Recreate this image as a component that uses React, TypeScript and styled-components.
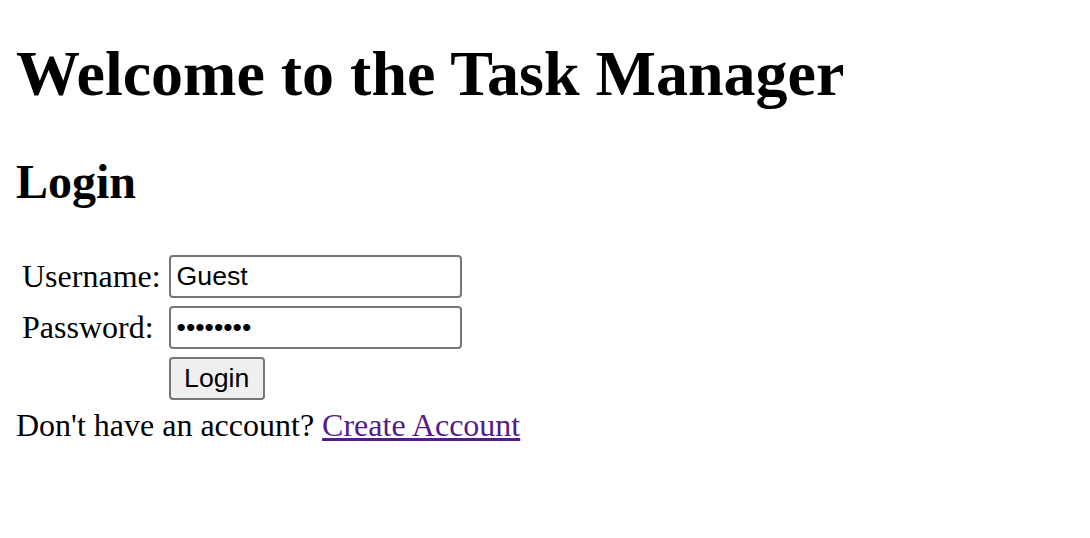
import {FC} from "react";
import styled, {createGlobalStyle} from "styled-components";

const GlobalStyle = createGlobalStyle`
  html, body {
    margin: 0;
    padding: 0;
    background: #fff;
  }

  body {
    margin: 16px;
    font-family: "Liberation Serif", "Times New Roman", serif;
    font-size: 32px;
    color: #000;
  }
`;

const Page = styled.div`
  display: block;
`;

const Title = styled.h1`
  font-size: 64px;
  font-weight: bold;
  margin: 21.44px 0 42.88px;
`;

const SubTitle = styled.h2`
  font-size: 48px;
  font-weight: bold;
  margin: 39.84px 0;
`;

const FormTable = styled.table`
  border-spacing: 4px;
  border-collapse: separate;
  font-size: 32px;
`;

const LabelCell = styled.td`
  padding: 2px;
  vertical-align: middle;
`;

const FieldCell = styled.td`
  padding: 2px;
  vertical-align: middle;
`;

const TextInput = styled.input`
  box-sizing: border-box;
  width: 293px;
  height: 43px;
  margin: 0;
  padding: 2px 6px;
  border: 2px solid #767676;
  border-radius: 4px;
  font-family: "Liberation Sans", Arial, sans-serif;
  font-size: 26.67px;
  color: #000;
  background: #fff;
  display: block;
`;

const Button = styled.button`
  box-sizing: border-box;
  height: 43px;
  margin: 0;
  padding: 2px 13.5px;
  border: 2px solid #767676;
  border-radius: 4px;
  background: #efefef;
  font-family: "Liberation Sans", Arial, sans-serif;
  font-size: 26.67px;
  color: #000;
  display: block;
`;

const Footer = styled.div`
  font-size: 32px;
  padding-top: 1px;
`;

const Link = styled.a`
  color: #551a8b;
  text-decoration: underline;
`;

const App: FC = () => {
    return (
        <Page>
            <GlobalStyle/>
            <Title>Welcome to the Task Manager</Title>
            <SubTitle>Login</SubTitle>
            <form onSubmit={(e) => {e.preventDefault()}}>
                <FormTable>
                    <tbody>
                    <tr>
                        <LabelCell><label htmlFor="username">Username:</label></LabelCell>
                        <FieldCell><TextInput id="username" type="text" defaultValue="Guest"/></FieldCell>
                    </tr>
                    <tr>
                        <LabelCell><label htmlFor="password">Password:</label></LabelCell>
                        <FieldCell><TextInput id="password" type="password" defaultValue="password"/></FieldCell>
                    </tr>
                    <tr>
                        <LabelCell></LabelCell>
                        <FieldCell><Button type="submit">Login</Button></FieldCell>
                    </tr>
                    </tbody>
                </FormTable>
            </form>
            <Footer>Don't have an account? <Link href="#">Create Account</Link></Footer>
        </Page>
    )
}

export default App;
